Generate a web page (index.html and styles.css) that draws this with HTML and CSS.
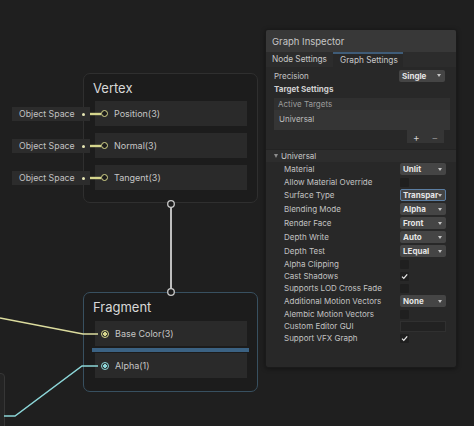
FILE: index.html
```html
<!DOCTYPE html>
<html lang="en">
<head>
    <meta charset="UTF-8">
    <meta name="viewport" content="width=device-width, initial-scale=1.0">
    <title>Shader Graph</title>
    <link rel="stylesheet" href="styles.css">
</head>
<body>
    <div class="canvas">
        <!-- node cut off at the left edge -->
        <div class="stub"></div>

        <div class="node vertex">
            <div class="node-title">Vertex</div>
            <div class="slot"><span class="port yellow"></span>Position(3)</div>
            <div class="slot"><span class="port yellow"></span>Normal(3)</div>
            <div class="slot"><span class="port yellow"></span>Tangent(3)</div>
        </div>

        <div class="node fragment">
            <div class="node-title">Fragment</div>
            <div class="slot"><span class="port yellow filled"></span>Base Color(3)</div>
            <div class="insert-bar"></div>
            <div class="slot"><span class="port cyan filled"></span>Alpha(1)</div>
        </div>

        <div class="label pos1"><span>Object Space</span><i class="dot"></i></div>
        <div class="label pos2"><span>Object Space</span><i class="dot"></i></div>
        <div class="label pos3"><span>Object Space</span><i class="dot"></i></div>

        <svg class="wires" width="474" height="426" viewBox="0 0 474 426">
            <polyline points="0,318 83,334 98,334" fill="none" stroke="#dcdc9e" stroke-width="1.5"/>
            <polyline points="4,416 15,416 82,366 98,366" fill="none" stroke="#8cd6d8" stroke-width="1.5"/>
            <line x1="90" y1="114" x2="101" y2="114" stroke="#d4d48c" stroke-width="2.4"/>
            <line x1="90" y1="146" x2="101" y2="146" stroke="#d4d48c" stroke-width="2.4"/>
            <line x1="90" y1="178" x2="101" y2="178" stroke="#d4d48c" stroke-width="2.4"/>
            <line x1="171" y1="204" x2="171" y2="292" stroke="#bebebe" stroke-width="2"/>
            <circle cx="171" cy="204" r="3.3" fill="#1c1c1c" stroke="#cacaca" stroke-width="1.3"/>
            <circle cx="171" cy="292" r="3.3" fill="#1c1c1c" stroke="#cacaca" stroke-width="1.3"/>
        </svg>

        <div class="inspector">
            <div class="insp-head">Graph Inspector</div>
            <div class="tabs">
                <div class="tab">Node Settings</div>
                <div class="tab active">Graph Settings</div>
            </div>

            <div class="section">
                <div class="field">
                    <span>Precision</span>
                    <div class="dropdown">Single<i class="arrow"></i></div>
                </div>
                <div class="field bold">Target Settings</div>
                <div class="list">
                    <div class="list-head">Active Targets</div>
                    <div class="list-body">Universal</div>
                </div>
                <div class="list-foot"><span>+</span><span class="minus">&minus;</span></div>
            </div>

            <div class="foldout"><i class="fold-arrow"></i>Universal</div>

            <div class="props">
                <div class="prop dd"><label>Material</label><div class="dropdown">Unlit<i class="arrow"></i></div></div>
                <div class="prop"><label>Allow Material Override</label><div class="checkbox"></div></div>
                <div class="prop dd"><label>Surface Type</label><div class="dropdown focus">Transpar<i class="arrow"></i></div></div>
                <div class="prop dd"><label>Blending Mode</label><div class="dropdown">Alpha<i class="arrow"></i></div></div>
                <div class="prop dd"><label>Render Face</label><div class="dropdown">Front<i class="arrow"></i></div></div>
                <div class="prop dd"><label>Depth Write</label><div class="dropdown">Auto<i class="arrow"></i></div></div>
                <div class="prop dd"><label>Depth Test</label><div class="dropdown">LEqual<i class="arrow"></i></div></div>
                <div class="prop"><label>Alpha Clipping</label><div class="checkbox"></div></div>
                <div class="prop"><label>Cast Shadows</label><div class="checkbox"><svg width="9" height="9" viewBox="0 0 9 9"><polyline points="2,4.6 3.8,6.4 7.2,2.4" fill="none" stroke="#e8e8e8" stroke-width="1.3"/></svg></div></div>
                <div class="prop"><label>Supports LOD Cross Fade</label><div class="checkbox"></div></div>
                <div class="prop dd"><label>Additional Motion Vectors</label><div class="dropdown">None<i class="arrow"></i></div></div>
                <div class="prop"><label>Alembic Motion Vectors</label><div class="checkbox"></div></div>
                <div class="prop"><label>Custom Editor GUI</label><div class="object-field"></div></div>
                <div class="prop"><label>Support VFX Graph</label><div class="checkbox"><svg width="9" height="9" viewBox="0 0 9 9"><polyline points="2,4.6 3.8,6.4 7.2,2.4" fill="none" stroke="#e8e8e8" stroke-width="1.3"/></svg></div></div>
            </div>
        </div>
    </div>
</body>
</html>
```

FILE: styles.css
```css
body {
    margin: 0;
    background-color: #1f1f1f;
}
.canvas {
    position: relative;
    width: 474px;
    height: 426px;
    overflow: hidden;
    background-color: #1f1f1f;
    font-family: Inter, "Noto Sans", sans-serif;
    color: #c4c4c4;
}
.wires {
    position: absolute;
    left: 0;
    top: 0;
}

/* graph nodes */
.stub {
    position: absolute;
    left: -12px;
    top: 373px;
    width: 15px;
    height: 80px;
    border: 1px solid #363636;
    border-radius: 4px;
    background-color: #242424;
}
.node {
    position: absolute;
    box-sizing: border-box;
    border: 1px solid #2f2f2f;
    border-radius: 7px;
    background-color: #1c1c1c;
    padding: 0 10px 0 11px;
}
.vertex {
    left: 83px;
    top: 73px;
    width: 175px;
    height: 130px;
}
.fragment {
    left: 83px;
    top: 292px;
    width: 175px;
    height: 100px;
    border-color: #385060;
}
.node-title {
    height: 27px;
    line-height: 29px;
    margin-left: -2px;
    font-size: 13px;
    color: #d8d8d8;
}
.fragment .node-title {
    height: 28px;
}
.slot {
    display: flex;
    align-items: center;
    gap: 6px;
    height: 25px;
    margin-bottom: 7px;
    padding-left: 6px;
    background-color: #2a2a2a;
    font-size: 9px;
    color: #c6c6c6;
}
.fragment .slot {
    margin-bottom: 0;
}
.port {
    box-sizing: border-box;
    width: 7px;
    height: 7px;
    border-radius: 50%;
    border: 1.4px solid #d6d68c;
    background-color: #1c1c1c;
}
.port.filled {
    width: 8px;
    height: 8px;
    border-width: 1.5px;
    background: radial-gradient(circle, #d6d68c 0 1.6px, #2a2a2a 2px);
}
.port.cyan {
    border-color: #8cd6d8;
    background: radial-gradient(circle, #8cd6d8 0 1.6px, #2a2a2a 2px);
}
.insert-bar {
    height: 4px;
    margin: 2px -2px 1px -3px;
    background-color: #3b6283;
}

/* property labels feeding the vertex node */
.label {
    position: absolute;
    left: 12px;
    width: 78px;
    height: 14px;
    box-sizing: border-box;
    display: flex;
    align-items: center;
    justify-content: space-between;
    padding: 0 5px 0 7px;
    background-color: #2c2c2c;
    font-size: 8.75px;
    color: #c2c2c2;
}
.pos1 { top: 107px; }
.pos2 { top: 139px; }
.pos3 { top: 171px; }
.dot {
    width: 3px;
    height: 3px;
    border-radius: 50%;
    background-color: #e6e6b4;
}

/* graph inspector window */
.inspector {
    position: absolute;
    left: 265px;
    top: 29px;
    width: 192px;
    height: 339px;
    box-sizing: border-box;
    border: 1px solid #1a1a1a;
    border-radius: 3px;
    background-color: #282828;
    box-shadow: 0 1px 4px rgba(0,0,0,0.4);
    overflow: hidden;
}
.insp-head {
    display: flex;
    align-items: center;
    height: 22px;
    padding-left: 6px;
    background-color: #383838;
    font-size: 9.5px;
    color: #c6c6c6;
}
.tabs {
    display: flex;
    height: 15px;
    background-color: #2c2c2c;
}
.tab {
    box-sizing: border-box;
    width: 67px;
    padding-left: 6px;
    line-height: 15px;
    font-size: 8.25px;
    color: #c8c8c8;
}
.tab.active {
    width: 70px;
    padding-left: 7px;
    line-height: 13px;
    border-top: 2px solid #3f5c78;
    background-color: #282828;
}
.section {
    padding: 2px 6px 0 8px;
}
.field {
    display: flex;
    align-items: center;
    justify-content: space-between;
    height: 13px;
    padding-right: 5px;
    font-size: 8px;
}
.field.bold {
    font-weight: 700;
    color: #d0d0d0;
}
.dropdown {
    box-sizing: border-box;
    display: flex;
    align-items: center;
    justify-content: space-between;
    width: 46px;
    height: 12px;
    padding: 0 4px 0 3px;
    border-radius: 2px;
    background-color: #454545;
    font-size: 8px;
    font-weight: 700;
    color: #e4e4e4;
    white-space: nowrap;
    overflow: hidden;
}
.dropdown.focus {
    border: 1px solid #5b7ea3;
    padding: 0 3px 0 2px;
}
.arrow {
    flex: none;
    width: 0;
    height: 0;
    border-left: 2.5px solid transparent;
    border-right: 2.5px solid transparent;
    border-top: 3px solid #c4c4c4;
}
.list {
    margin-top: 3px;
    background-color: #353535;
}
.list-head {
    height: 12px;
    line-height: 12px;
    padding-left: 4px;
    background-color: #303030;
    font-size: 8px;
    color: #9c9c9c;
}
.list-body {
    height: 20px;
    line-height: 18px;
    padding-left: 5px;
    font-size: 8px;
    color: #bcbcbc;
}
.list-foot {
    display: flex;
    align-items: center;
    justify-content: space-around;
    width: 37px;
    height: 13px;
    margin: 0 6px 0 auto;
    background-color: #353535;
    font-size: 10px;
    color: #d0d0d0;
}
.list-foot .minus {
    color: #8a8a8a;
}
.foldout {
    display: flex;
    align-items: center;
    gap: 3px;
    height: 12px;
    margin-top: 6px;
    padding-left: 8px;
    border-top: 1px solid #232323;
    background-color: #2d2d2d;
    font-size: 8px;
    color: #c6c6c6;
}
.fold-arrow {
    width: 0;
    height: 0;
    border-left: 2.5px solid transparent;
    border-right: 2.5px solid transparent;
    border-top: 4px solid #8c8c8c;
}
.props {
    padding-left: 18px;
}
.prop {
    display: flex;
    align-items: center;
    height: 12px;
}
.prop.dd {
    height: 14px;
}
.prop label {
    width: 116px;
    font-size: 8px;
    color: #c2c2c2;
}
.checkbox {
    width: 9px;
    height: 9px;
    border-radius: 1px;
    background-color: #1f1f1f;
}
.checkbox svg {
    display: block;
}
.object-field {
    box-sizing: border-box;
    width: 46px;
    height: 11px;
    border: 1px solid #303030;
    background-color: #222222;
}
```
